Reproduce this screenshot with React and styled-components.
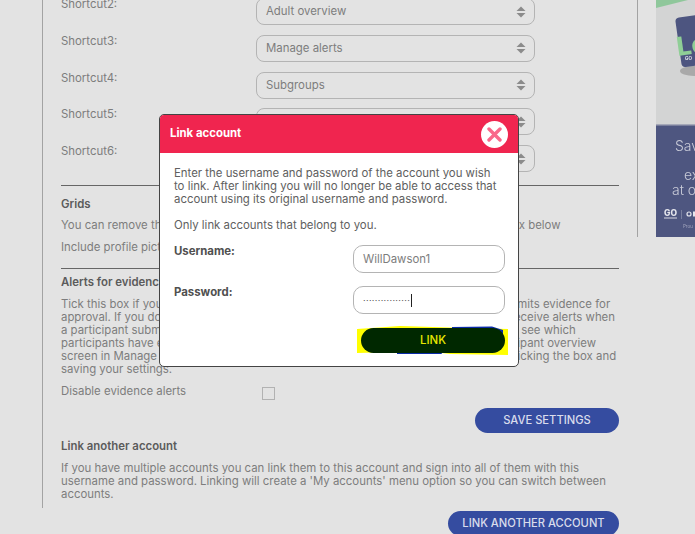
import React from 'react'
import styled, { createGlobalStyle } from 'styled-components'

const GlobalStyle = createGlobalStyle`
html, body {
    margin: 0;
    padding: 0;
    background: #e3e3e3;
}
body {
    font-family: Inter, "Open Sans", sans-serif;
    font-size: 11.4px;
    line-height: 13px;
    color: #7d7d7d;
}
`

const shortcuts = [
    { label: 'Shortcut2:', value: 'Adult overview' },
    { label: 'Shortcut3:', value: 'Manage alerts' },
    { label: 'Shortcut4:', value: 'Subgroups' },
    { label: 'Shortcut5:', value: 'Reports' },
    { label: 'Shortcut6:', value: 'Messages' },
]

function SelectArrows() {
    return (
        <ArrowSvg width="10" height="12" viewBox="0 0 10 12">
            <path d="M5 0.5 L9.5 5 H0.5 Z" fill="#8b8b8b" />
            <path d="M5 11.5 L9.5 7 H0.5 Z" fill="#8b8b8b" />
        </ArrowSvg>
    )
}

function AdPicture() {
    return (
        <AdSvg width="39" height="237" viewBox="656 0 39 237">
            <rect x="656" y="0" width="39" height="125" fill="#d3d4d4" />
            <path d="M656 0 H688 L656 8 Z" fill="#8fc79b" />
            <ellipse cx="694" cy="71" rx="14" ry="5" fill="#a9a9a9" />
            <rect x="675" y="18" width="50" height="50" rx="4" fill="#4d5580" transform="rotate(-8 675 18)" />
            <text x="678" y="56" fontSize="26" fontWeight="800" fill="#8fce96" transform="rotate(-8 678 56)" fontFamily="Inter, sans-serif">Le</text>
            <text x="685" y="60" fontSize="4.5" fontWeight="700" fill="#e6e6ee" fontFamily="Inter, sans-serif">GO</text>
            <rect x="656" y="124" width="39" height="113" fill="#4e5680" />
            <rect x="656" y="124" width="39" height="1.5" fill="#a5a8b8" />
            <g fill="#c9cbd8" fontFamily="Inter, sans-serif" fontWeight="300">
                <text x="675" y="151" fontSize="14">Save</text>
                <text x="684" y="180" fontSize="14">ex</text>
                <text x="672" y="195" fontSize="14">at o</text>
            </g>
            <text x="664" y="216" fontSize="8.5" fontWeight="800" fill="#e4e5ec" fontFamily="Inter, sans-serif">GO</text>
            <rect x="664" y="217.5" width="13" height="1" fill="#d5d6e0" />
            <rect x="681" y="210" width="0.7" height="9" fill="#8d92ad" />
            <circle cx="689" cy="214" r="2" fill="none" stroke="#e4e5ec" strokeWidth="1.2" />
            <rect x="693" y="211.5" width="2" height="5" fill="#e4e5ec" />
            <text x="683" y="228" fontSize="4.5" fill="#9fa3bb" fontFamily="Inter, sans-serif">Prou</text>
        </AdSvg>
    )
}

function App() {
    return (
        <Page>
            <GlobalStyle />
            <Layout>
                <Main>
                    <ShortcutList>
                        {shortcuts.map((item) => (
                            <ShortcutRow key={item.label}>
                                <FieldLabel>{item.label}</FieldLabel>
                                <Select>
                                    {item.value}
                                    <SelectArrows />
                                </Select>
                            </ShortcutRow>
                        ))}
                    </ShortcutList>

                    <Section>
                        <Heading>Grids</Heading>
                        <Text>You can remove the profile pictures from the grids in your system by unticking the box below</Text>
                        <Text>Include profile pictures</Text>
                    </Section>

                    <Section tight>
                        <Heading wide>Alerts for evidence</Heading>
                        <Text>
                            Tick this box if you don't want to receive evidence alerts every time a participant submits evidence for<br />
                            approval. If you do not tick the box you will still use the system as usual but will not receive alerts when<br />
                            a participant submits evidence for approval, but you will still be able to go in and now see which<br />
                            participants have evidence waiting for approval by reviewing the column in the participant overview<br />
                            screen in Manage participants. You can reset all the alerts back on at any time by unticking the box and<br />
                            saving your settings.
                        </Text>
                        <CheckRow>
                            <FieldLabel>Disable evidence alerts</FieldLabel>
                            <Checkbox />
                        </CheckRow>
                        <ButtonRow>
                            <BlueButton width={144}>SAVE SETTINGS</BlueButton>
                        </ButtonRow>
                    </Section>

                    <Heading wide>Link another account</Heading>
                    <LastText>
                        If you have multiple accounts you can link them to this account and sign into all of them with this<br />
                        username and password. Linking will create a 'My accounts' menu option so you can switch between<br />
                        accounts.
                    </LastText>
                </Main>
                <Aside>
                    <AdPicture />
                </Aside>
            </Layout>
            <Footer>
                <BlueButton width={171}>LINK ANOTHER ACCOUNT</BlueButton>
            </Footer>

            <Modal>
                <ModalHeader>
                    <ModalTitle>Link account</ModalTitle>
                    <CloseButton>
                        <svg width="15" height="15" viewBox="0 0 15 15">
                            <path d="M2 2 L13 13 M13 2 L2 13" stroke="#f9688a" strokeWidth="3.4" strokeLinecap="round" />
                        </svg>
                    </CloseButton>
                </ModalHeader>
                <ModalBody>
                    <ModalText>
                        Enter the username and password of the account you wish<br />
                        to link. After linking you will no longer be able to access that<br />
                        account using its original username and password.<br />
                        <br />
                        Only link accounts that belong to you.
                    </ModalText>
                    <FormRow>
                        <FormLabel>Username:</FormLabel>
                        <Field>WillDawson1</Field>
                    </FormRow>
                    <FormRow>
                        <FormLabel>Password:</FormLabel>
                        <Field>
                            <Dots>················</Dots>
                            <Caret />
                        </Field>
                    </FormRow>
                    <LinkHighlight>
                        <LinkButton>LINK</LinkButton>
                    </LinkHighlight>
                </ModalBody>
            </Modal>
        </Page>
    )
}

export default App

const Page = styled.div`
position: relative;
width: 695px;
height: 534px;
overflow: hidden;
background: #e3e3e3;
`

const Layout = styled.div`
display: flex;
align-items: flex-start;
margin-top: -2px;
margin-left: 42px;
`

const Main = styled.div`
width: 558px;
flex-shrink: 0;
padding: 0 18px 7px;
border-left: 1px solid #a3a3a3;
`

const ShortcutList = styled.div`
display: flex;
flex-direction: column;
gap: 9.75px;
padding-bottom: 13.4px;
`

const ShortcutRow = styled.div`
display: flex;
align-items: flex-start;
`

const FieldLabel = styled.div`
width: 195px;
flex-shrink: 0;
`

const Select = styled.div`
position: relative;
box-sizing: border-box;
width: 279px;
height: 27px;
padding: 0 9px;
display: flex;
align-items: center;
justify-content: space-between;
border: 1px solid #b4b4b4;
border-radius: 8px;
`

const ArrowSvg = styled.svg`
margin-right: -1px;
`

const Section = styled.div`
border-top: 1px solid #666;
padding-top: ${(props) => (props.tight ? '7px' : '12px')};
padding-bottom: ${(props) => (props.tight ? '7px' : '5px')};
`

const Heading = styled.div`
font-weight: 600;
color: #5b5b5b;
margin-bottom: ${(props) => (props.wide ? '9px' : '8px')};
`

const Text = styled.p`
margin: 0 0 9px;
white-space: nowrap;
`

const LastText = styled(Text)`
margin: 0;
`

const CheckRow = styled.div`
display: flex;
align-items: flex-start;
`

const Checkbox = styled.span`
box-sizing: border-box;
width: 13px;
height: 13px;
margin: 2px 0 0 6px;
border: 1px solid #b2b2b2;
`

const ButtonRow = styled.div`
display: flex;
justify-content: flex-end;
margin-top: 8px;
`

const BlueButton = styled.button`
box-sizing: border-box;
width: ${(props) => props.width}px;
height: 25px;
padding: 0 0 1px;
border: 0;
border-radius: 13px;
background: #354ca0;
color: #d9dcec;
font: 500 11.2px Inter, sans-serif;
`

const Aside = styled.div`
flex-shrink: 0;
padding: 2px 0 0 18px;
border-left: 1px solid #a3a3a3;
`

const AdSvg = styled.svg`
display: block;
filter: blur(0.4px);
`

const Footer = styled.div`
display: flex;
justify-content: flex-end;
padding: 3px 76px 0 0;
`

const Modal = styled.div`
position: absolute;
left: 159px;
top: 114px;
box-sizing: border-box;
width: 360px;
height: 253px;
background: #fff;
border: 1px solid #444;
border-radius: 5px;
overflow: hidden;
`

const ModalHeader = styled.div`
height: 38px;
display: flex;
align-items: center;
justify-content: space-between;
padding: 0 10px;
background: #f0254f;
`

const ModalTitle = styled.div`
padding-bottom: 2px;
color: #fff;
font-weight: 700;
font-size: 11.4px;
`

const CloseButton = styled.div`
width: 27px;
height: 27px;
border-radius: 50%;
background: #fff;
display: flex;
align-items: center;
justify-content: center;
`

const ModalBody = styled.div`
padding: 14px 13px 0 14px;
display: flex;
flex-direction: column;
`

const ModalText = styled.p`
margin: 0 0 13px;
color: #606060;
white-space: nowrap;
`

const FormRow = styled.div`
display: flex;
justify-content: space-between;
align-items: flex-start;
margin-bottom: 13px;
`

const FormLabel = styled.div`
font-weight: 700;
color: #505050;
`

const Field = styled.div`
box-sizing: border-box;
width: 152px;
height: 28px;
padding: 0 9px;
display: flex;
align-items: center;
border: 1px solid #b4b4b4;
border-radius: 10px;
color: #7d7d7d;
`

const Dots = styled.span`
font-size: 9px;
letter-spacing: 0.35px;
color: #555;
`

const Caret = styled.span`
width: 1px;
height: 13px;
margin-left: 1px;
background: #222;
`

const LinkHighlight = styled.div`
position: relative;
align-self: flex-end;
box-sizing: border-box;
width: 151px;
height: 30px;
margin: -1px -3px 0 0;
padding: 2px 3px 0 4px;
&::before {
    content: "";
    position: absolute;
    inset: 0;
    background: #ffff00;
    clip-path: polygon(0 3px, 43px 0, 93px 1.5px, 151px 3px, 151px 29px, 93px 28px, 76px 26px, 40px 26px, 0 27px);
}
&::after {
    content: "";
    position: absolute;
    inset: 0;
    background: #0a2aa8;
    clip-path: polygon(95px 1px, 135px 0.5px, 146px 4px, 146px 10px, 76px 10px, 85px 28px, 40px 28px, 40px 10px, 95px 10px);
}
`

const LinkButton = styled.button`
position: relative;
z-index: 1;
display: block;
width: 144px;
height: 25px;
padding: 0 0 2px;
border: 0;
border-radius: 13px;
background: #002800;
color: #e6e600;
font: 500 11.4px Inter, sans-serif;
`
